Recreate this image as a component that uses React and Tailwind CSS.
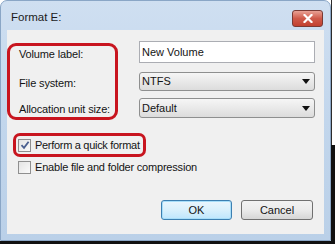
import React from "react";

const FONT = { fontFamily: '"Liberation Sans", Arial, sans-serif' };

function DropArrow() {
  return (
    <svg width="8" height="5" viewBox="0 0 8 5" className="shrink-0">
      <path d="M0 0 H8 L4 5 Z" fill="#111" />
    </svg>
  );
}

function Select({ value, className = "" }) {
  return (
    <div className={`flex items-center justify-between rounded-[3px] border border-[#8e8f8f] bg-gradient-to-b from-[#f6f6f6] via-[#e9e9e9] to-[#dcdcdc] pl-[2px] pr-[4px] ${className}`}>
      <span>{value}</span>
      <DropArrow />
    </div>
  );
}

function Checkbox({ checked }) {
  return (
    <div className="w-[13px] h-[13px] shrink-0 border border-[#8f8f8f] bg-gradient-to-br from-[#e4e4e4] to-[#fafafa] flex items-center justify-center">
      {checked && (
        <svg width="10" height="10" viewBox="0 0 10 10">
          <path d="M1.5 5.2 L4 7.8 L8.6 1.8" fill="none" stroke="#4a5f8f" strokeWidth="1.8" />
        </svg>
      )}
    </div>
  );
}

export default function App() {
  return (
    <div className="w-[335px] h-[244px] bg-white flex flex-col overflow-hidden text-[11px] text-[#141414]" style={FONT}>
      <div className="flex h-[241px]">
        {/* Window */}
        <div className="w-[331px] h-full flex flex-col rounded-t-[7px] border border-[#8aa6c6] bg-gradient-to-b from-[#cfdff1] via-[#c2d6ec] to-[#bad0e8]">
          {/* Title bar */}
          <div className="h-[29px] flex items-center justify-between pl-[10px] pr-[7px]">
            <span className="text-[11.5px] text-[#1b1b1b] mt-[5px]">Format E:</span>
            <div className="w-[31px] h-[17px] mt-[6px] rounded-[3px] border border-[#7a3a34] bg-gradient-to-b from-[#e8a195] via-[#cf5a4a] to-[#c2402f] flex items-center justify-center">
              <svg width="10" height="9" viewBox="0 0 10 9">
                <path d="M1.5 1 L8.5 8 M8.5 1 L1.5 8" stroke="#fff" strokeWidth="2.2" strokeLinecap="square" />
              </svg>
            </div>
          </div>

          {/* Client area */}
          <div className="mx-[6px] h-[204px] bg-[#f0f0f0] flex flex-col">
            <div className="flex items-start">
              <div className="mt-[13px] w-[111px] h-[77px] border-[3px] border-[#c8151f] rounded-[9px] pl-[9px] flex flex-col whitespace-nowrap tracking-[-0.15px]">
                <div className="leading-[14px] mt-[1px]">Volume label:</div>
                <div className="leading-[14px] mt-[15px]">File system:</div>
                <div className="leading-[14px] mt-[12px]">Allocation unit size:</div>
              </div>
              <div className="mt-[11px] ml-[21px] w-[176px] flex flex-col">
                <div className="h-[22px] border border-[#abadb3] bg-white flex items-center pl-[2px]">New Volume</div>
                <Select value="NTFS" className="mt-[9px] h-[19px]" />
                <Select value="Default" className="mt-[7px] h-[20px]" />
              </div>
            </div>

            <div className="mt-[13px] ml-[6px] w-[133px] h-[24px] border-[3px] border-[#c8151f] rounded-[7px] flex items-center pl-[2px] gap-[4px] whitespace-nowrap">
              <Checkbox checked />
              <span className="tracking-[-0.3px]">Perform a quick format</span>
            </div>
            <div className="mt-[4px] ml-[11px] h-[13px] flex items-center gap-[4px] whitespace-nowrap">
              <Checkbox />
              <span className="tracking-[-0.2px]">Enable file and folder compression</span>
            </div>

            <div className="mt-[26px] flex justify-end gap-[9px] pr-[11px]">
              <button className="w-[71px] h-[20px] rounded-[3px] border border-[#3c7fb1] bg-gradient-to-b from-[#eaf6fd] via-[#d9f0fc] to-[#bee6fd] shadow-[inset_0_0_0_1px_#a8def9] text-[11px] text-[#141414]">
                OK
              </button>
              <button className="w-[72px] h-[20px] rounded-[3px] border border-[#707070] bg-gradient-to-b from-[#f2f2f2] via-[#ebebeb] to-[#d6d6d6] text-[11px] text-[#141414]">
                Cancel
              </button>
            </div>
          </div>
        </div>

        {/* Right edge of the screen behind */}
        <div className="w-[4px] h-full flex flex-col">
          <div className="h-[145px] bg-white border-l border-[#2b2b2b]" />
          <div className="flex-1 bg-[#111]" />
        </div>
      </div>
      <div className="h-[3px] bg-[#111]" />
    </div>
  );
}
